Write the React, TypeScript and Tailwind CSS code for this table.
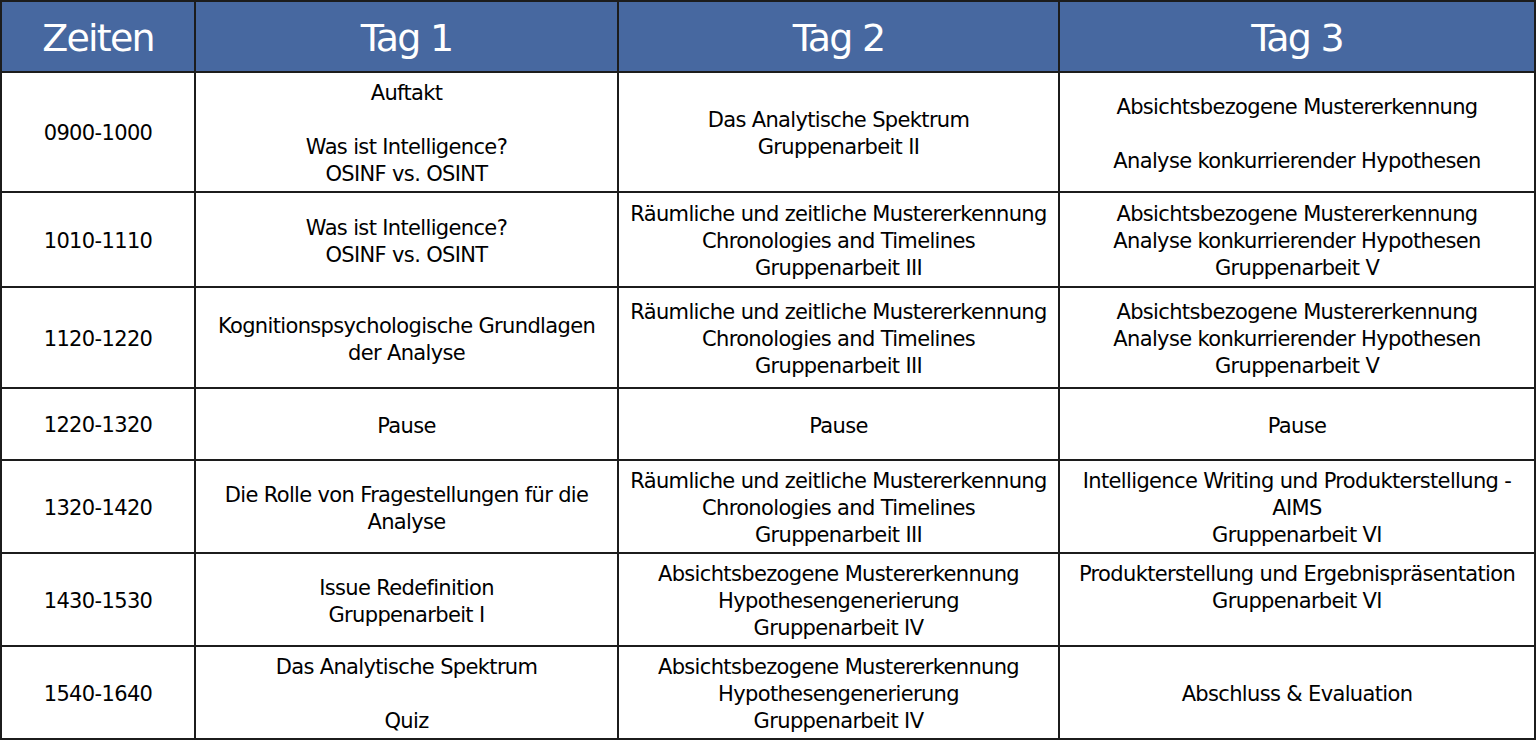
import React from 'react';

const rows: { time: string; h: string; cells: string[][] }[] = [
  {
    time: '0900-1000',
    h: 'h-[118px]',
    cells: [
      ['Auftakt', '', 'Was ist Intelligence?', 'OSINF vs. OSINT'],
      ['Das Analytische Spektrum', 'Gruppenarbeit II'],
      ['Absichtsbezogene Mustererkennung', '', 'Analyse konkurrierender Hypothesen'],
    ],
  },
  {
    time: '1010-1110',
    h: 'h-[93px]',
    cells: [
      ['Was ist Intelligence?', 'OSINF vs. OSINT'],
      ['Räumliche und zeitliche Mustererkennung', 'Chronologies and Timelines', 'Gruppenarbeit III'],
      ['Absichtsbezogene Mustererkennung', 'Analyse konkurrierender Hypothesen', 'Gruppenarbeit V'],
    ],
  },
  {
    time: '1120-1220',
    h: 'h-[99px]',
    cells: [
      ['Kognitionspsychologische Grundlagen', 'der Analyse'],
      ['Räumliche und zeitliche Mustererkennung', 'Chronologies and Timelines', 'Gruppenarbeit III'],
      ['Absichtsbezogene Mustererkennung', 'Analyse konkurrierender Hypothesen', 'Gruppenarbeit V'],
    ],
  },
  {
    time: '1220-1320',
    h: 'h-[70px]',
    cells: [['Pause'], ['Pause'], ['Pause']],
  },
  {
    time: '1320-1420',
    h: 'h-[91px]',
    cells: [
      ['Die Rolle von Fragestellungen für die', 'Analyse'],
      ['Räumliche und zeitliche Mustererkennung', 'Chronologies and Timelines', 'Gruppenarbeit III'],
      ['Intelligence Writing und Produkterstellung -', 'AIMS', 'Gruppenarbeit VI'],
    ],
  },
  {
    time: '1430-1530',
    h: 'h-[91px]',
    cells: [
      ['Issue Redefinition', 'Gruppenarbeit I'],
      ['Absichtsbezogene Mustererkennung', 'Hypothesengenerierung', 'Gruppenarbeit IV'],
      ['Produkterstellung und Ergebnispräsentation', 'Gruppenarbeit VI', ''],
    ],
  },
  {
    time: '1540-1640',
    h: 'h-[91px]',
    cells: [
      ['Das Analytische Spektrum', '', 'Quiz'],
      ['Absichtsbezogene Mustererkennung', 'Hypothesengenerierung', 'Gruppenarbeit IV'],
      ['Abschluss & Evaluation'],
    ],
  },
];

const Cell = ({ lines }: { lines: string[] }) => (
  <div className="bg-white pt-[4px] flex flex-col items-center justify-center text-center">
    {lines.map((l, i) => (
      <div key={i} className="h-[27px] leading-[27px] whitespace-nowrap">
        {l || '\u00a0'}
      </div>
    ))}
  </div>
);

export default function App() {
  return (
    <div className="w-[1536px] h-[747px] bg-white">
      <div
        className="grid grid-cols-[192px_421px_439px_474px] gap-[2px] p-[2px] bg-[#1c1c1c] text-[21px] text-black tracking-[-0.65px]"
        style={{ fontFamily: '"DejaVu Sans", Verdana, sans-serif' }}
      >
        {['Zeiten', 'Tag 1', 'Tag 2', 'Tag 3'].map((t) => (
          <div
            key={t}
            className="h-[69px] pt-[4px] bg-[#4768a0] text-white text-[38px] tracking-[-1.8px] flex items-center justify-center"
          >
            {t}
          </div>
        ))}
        {rows.map((r) => (
          <React.Fragment key={r.time}>
            <div className={`${r.h} pt-[4px] bg-white flex items-center justify-center`}>{r.time}</div>
            {r.cells.map((c, i) => (
              <Cell key={i} lines={c} />
            ))}
          </React.Fragment>
        ))}
      </div>
    </div>
  );
}
